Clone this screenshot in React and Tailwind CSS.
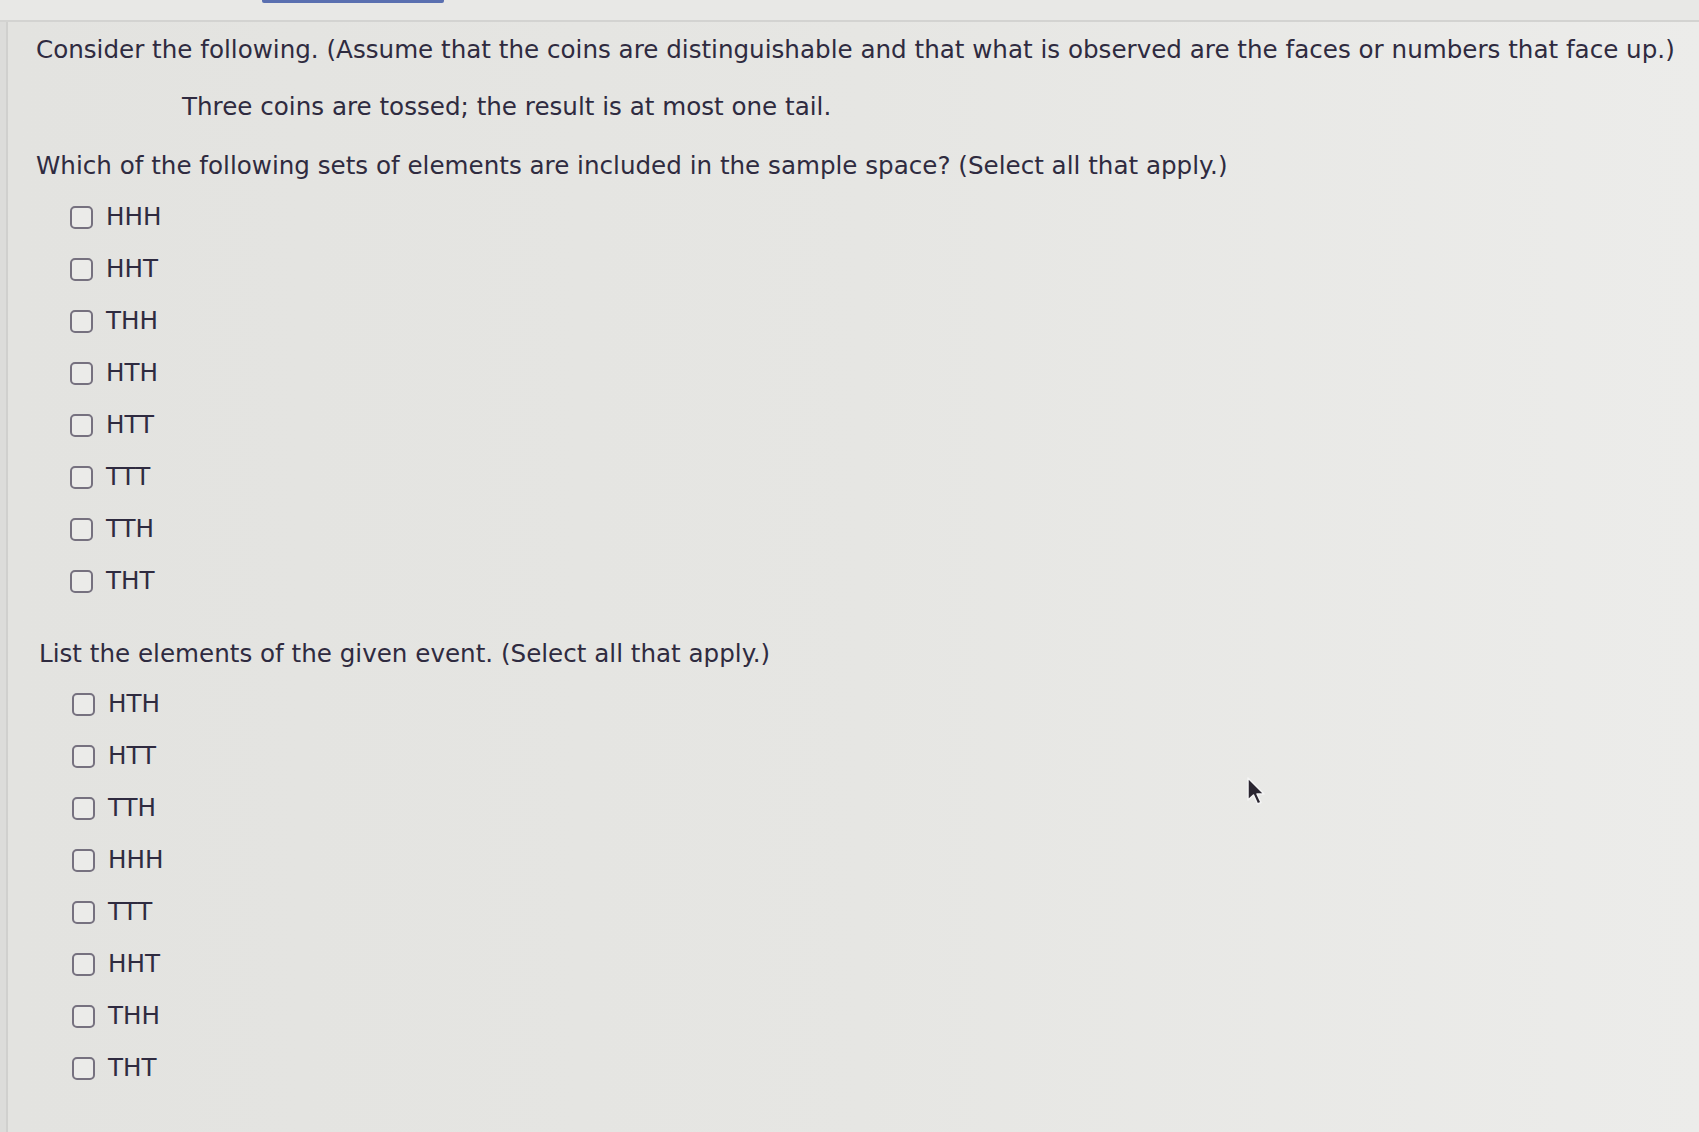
const sampleSpace = ['HHH', 'HHT', 'THH', 'HTH', 'HTT', 'TTT', 'TTH', 'THT']
const eventItems = ['HTH', 'HTT', 'TTH', 'HHH', 'TTT', 'HHT', 'THH', 'THT']

function Option({ label }) {
  return (
    <label className="flex items-center h-[52px] gap-[13px]">
      <span className="w-[23px] h-[23px] rounded-[5px] border-2 border-[#76717f] bg-[#ebebe9] shrink-0" />
      <span>{label}</span>
    </label>
  )
}

export default function App() {
  return (
    <div
      className="w-[1699px] h-[1132px] overflow-hidden bg-[#e5e5e2] text-[#2f2b40] text-[24.6px] relative"
      style={{ fontFamily: '"DejaVu Sans", Verdana, sans-serif' }}
    >
      {/* top strip */}
      <div className="h-[22px] bg-[#e8e8e6] border-b-2 border-[#d3d3d1] relative">
        <div className="absolute left-[262px] top-0 w-[182px] h-[3px] rounded-b-[2px] bg-[#5a6fb0]" />
      </div>

      <div className="flex h-full">
        <div className="w-[8px] bg-[#dcdcda] border-r-2 border-[#d0d0ce] shrink-0" />
        <div className="flex-1 pl-[28px] bg-gradient-to-r from-[#e3e3e0] via-[#e6e6e3] to-[#ececea]">
          <p className="pt-[14px] leading-[28px] whitespace-nowrap">
            Consider the following. (Assume that the coins are distinguishable and that what is observed are the faces or numbers that face up.)
          </p>
          <p className="pl-[146px] mt-[29px] leading-[28px]">
            Three coins are tossed; the result is at most one tail.
          </p>
          <p className="mt-[31px] leading-[28px]">
            Which of the following sets of elements are included in the sample space? (Select all that apply.)
          </p>
          <div className="pl-[34px] mt-[11px] flex flex-col">
            {sampleSpace.map((s) => (
              <Option key={'a' + s} label={s} />
            ))}
          </div>
          <p className="mt-[33px] pl-[3px] leading-[28px]">
            List the elements of the given event. (Select all that apply.)
          </p>
          <div className="pl-[36px] mt-[10px] flex flex-col">
            {eventItems.map((s) => (
              <Option key={'b' + s} label={s} />
            ))}
          </div>
        </div>
      </div>

      {/* mouse cursor */}
      <div className="absolute left-[1246px] top-[776px]">
        <svg width="22" height="30" viewBox="0 0 22 30">
          <path d="M2 2 L2 24 L7.5 19 L11.5 28 L15 26.5 L11 18 L18 18 Z" fill="#2a2530" stroke="#f4f4f4" strokeWidth="1.5" strokeLinejoin="round" />
        </svg>
      </div>
    </div>
  )
}
